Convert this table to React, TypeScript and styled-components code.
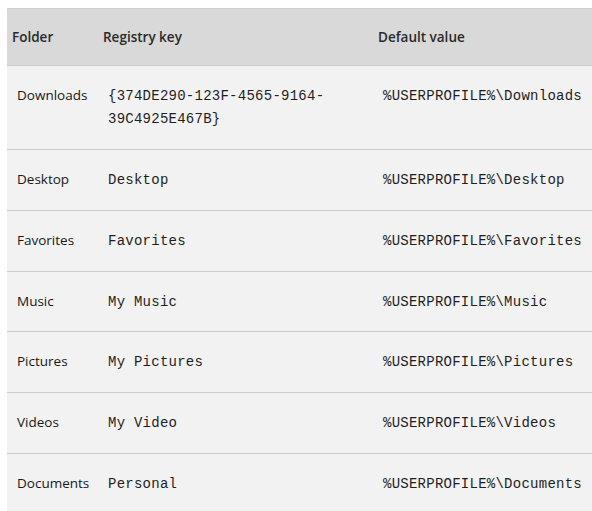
import React from "react";
import styled, { createGlobalStyle } from "styled-components";

const GlobalStyle = createGlobalStyle`
  html, body {
    margin: 0;
    padding: 0;
    background: #ffffff;
    overflow: hidden;
  }
  body {
    padding: 8px 0 0 7px;
    font-family: "Segoe UI", "Open Sans", "Noto Sans", sans-serif;
    color: #171717;
  }
`;

const Table = styled.table`
  width: 585px;
  table-layout: fixed;
  border-collapse: collapse;
  font-size: 13.5px;
  line-height: 23.7px;
`;

const HeadRow = styled.tr`
  background: #d9d9d9;
  border-top: 1px solid #cfcfcf;
`;

const HeadCell = styled.th`
  text-align: left;
  vertical-align: top;
  font-weight: 600;
  padding: 17px 5px 15px;
  color: #2a2a2a;
`;

const Row = styled.tr`
  background: #f2f2f2;
  border-top: 1px solid #cbcbcb;
`;

const Cell = styled.td<{ $mono?: boolean }>`
  vertical-align: top;
  padding: 18px 10px;
  ${(p) =>
    p.$mono &&
    `
    padding: 19px 10px 17px;
    font-family: "Liberation Mono", "Courier New", monospace;
    font-size: 14px;
    letter-spacing: 0.25px;
    color: #1e1e1e;
  `}
`;

interface FolderRow {
  folder: string;
  key: React.ReactNode;
  value: string;
}

const rows: FolderRow[] = [
  {
    folder: "Downloads",
    key: (
      <>
        {"{374DE290-123F-4565-9164-"}
        <br />
        {"39C4925E467B}"}
      </>
    ),
    value: "%USERPROFILE%\\Downloads",
  },
  { folder: "Desktop", key: "Desktop", value: "%USERPROFILE%\\Desktop" },
  { folder: "Favorites", key: "Favorites", value: "%USERPROFILE%\\Favorites" },
  { folder: "Music", key: "My Music", value: "%USERPROFILE%\\Music" },
  { folder: "Pictures", key: "My Pictures", value: "%USERPROFILE%\\Pictures" },
  { folder: "Videos", key: "My Video", value: "%USERPROFILE%\\Videos" },
  { folder: "Documents", key: "Personal", value: "%USERPROFILE%\\Documents" },
];

export default function App() {
  return (
    <>
      <GlobalStyle />
      <Table>
        <colgroup>
          <col style={{ width: 91 }} />
          <col style={{ width: 275 }} />
          <col />
        </colgroup>
        <thead>
          <HeadRow>
            <HeadCell>Folder</HeadCell>
            <HeadCell>Registry key</HeadCell>
            <HeadCell>Default value</HeadCell>
          </HeadRow>
        </thead>
        <tbody>
          {rows.map((r) => (
            <Row key={r.folder}>
              <Cell>{r.folder}</Cell>
              <Cell $mono>{r.key}</Cell>
              <Cell $mono>{r.value}</Cell>
            </Row>
          ))}
        </tbody>
      </Table>
    </>
  );
}
